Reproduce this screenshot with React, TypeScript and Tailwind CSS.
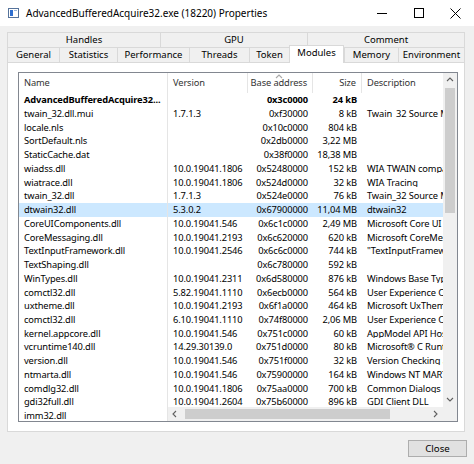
import React from 'react'

type Row = {
  name: string
  version: string
  base: string
  size: string
  desc: string
  bold?: boolean
}

const ROWS: Row[] = [
  { name: 'AdvancedBufferedAcquire32...', version: '', base: '0x3c0000', size: '24 kB', desc: '', bold: true },
  { name: 'twain_32.dll.mui', version: '1.7.1.3', base: '0xf30000', size: '8 kB', desc: 'Twain_32 Source Manager' },
  { name: 'locale.nls', version: '', base: '0x10c0000', size: '804 kB', desc: '' },
  { name: 'SortDefault.nls', version: '', base: '0x2db0000', size: '3,22 MB', desc: '' },
  { name: 'StaticCache.dat', version: '', base: '0x38f0000', size: '18,38 MB', desc: '' },
  { name: 'wiadss.dll', version: '10.0.19041.1806', base: '0x52480000', size: '152 kB', desc: 'WIA TWAIN compatibility layer' },
  { name: 'wiatrace.dll', version: '10.0.19041.1806', base: '0x524d0000', size: '32 kB', desc: 'WIA Tracing' },
  { name: 'twain_32.dll', version: '1.7.1.3', base: '0x524e0000', size: '76 kB', desc: 'Twain_32 Source Manager' },
  { name: 'dtwain32.dll', version: '5.3.0.2', base: '0x67900000', size: '11,04 MB', desc: 'dtwain32' },
  { name: 'CoreUIComponents.dll', version: '10.0.19041.546', base: '0x6c1c0000', size: '2,49 MB', desc: 'Microsoft Core UI Components' },
  { name: 'CoreMessaging.dll', version: '10.0.19041.2193', base: '0x6c620000', size: '620 kB', desc: 'Microsoft CoreMessaging Dll' },
  { name: 'TextInputFramework.dll', version: '10.0.19041.2546', base: '0x6c6c0000', size: '744 kB', desc: '"TextInputFramework.DYNLINK"' },
  { name: 'TextShaping.dll', version: '', base: '0x6c780000', size: '592 kB', desc: '' },
  { name: 'WinTypes.dll', version: '10.0.19041.2311', base: '0x6d580000', size: '876 kB', desc: 'Windows Base Types DLL' },
  { name: 'comctl32.dll', version: '5.82.19041.1110', base: '0x6ecb0000', size: '564 kB', desc: 'User Experience Controls Library' },
  { name: 'uxtheme.dll', version: '10.0.19041.2193', base: '0x6f1a0000', size: '464 kB', desc: 'Microsoft UxTheme Library' },
  { name: 'comctl32.dll', version: '6.10.19041.1110', base: '0x74f80000', size: '2,06 MB', desc: 'User Experience Controls Library' },
  { name: 'kernel.appcore.dll', version: '10.0.19041.546', base: '0x751c0000', size: '60 kB', desc: 'AppModel API Host' },
  { name: 'vcruntime140.dll', version: '14.29.30139.0', base: '0x751d0000', size: '80 kB', desc: 'Microsoft® C Runtime Library' },
  { name: 'version.dll', version: '10.0.19041.546', base: '0x751f0000', size: '32 kB', desc: 'Version Checking and File Installation' },
  { name: 'ntmarta.dll', version: '10.0.19041.546', base: '0x75900000', size: '164 kB', desc: 'Windows NT MARTA provider' },
  { name: 'comdlg32.dll', version: '10.0.19041.1806', base: '0x75aa0000', size: '700 kB', desc: 'Common Dialogs DLL' },
  { name: 'gdi32full.dll', version: '10.0.19041.2604', base: '0x75b60000', size: '896 kB', desc: 'GDI Client DLL' },
  { name: 'imm32.dll', version: '10.0.19041.2193', base: '0x75c70000', size: '156 kB', desc: 'Multi-User Windows IMM32 API' },
]

const SELECTED = 8

const TOP_TABS = [
  { label: 'Handles', w: 'w-[153px]' },
  { label: 'GPU', w: 'w-[147px]' },
  { label: 'Comment', w: 'flex-1' },
]

const BOTTOM_TABS = [
  { label: 'General', w: 'w-[52px]' },
  { label: 'Statistics', w: 'w-[58px]' },
  { label: 'Performance', w: 'w-[72px]' },
  { label: 'Threads', w: 'w-[60px]' },
  { label: 'Token', w: 'w-[40px]' },
  { label: 'Modules', w: 'w-[55px]', active: true },
  { label: 'Memory', w: 'w-[54px]' },
  { label: 'Environment', w: 'flex-1' },
]

function AppIcon() {
  return (
    <svg width="11" height="10" viewBox="0 0 11 10" className="shrink-0">
      <rect x="0.5" y="0.5" width="10" height="9" fill="#fff" stroke="#56739b" />
      <rect x="2" y="2" width="3" height="6" fill="#2f6fd0" />
      <rect x="6" y="2" width="3" height="1" fill="#9fb6d6" />
    </svg>
  )
}

function Chevron({ dir, color = '#606060' }: { dir: 'up' | 'down' | 'left' | 'right'; color?: string }) {
  const pts =
    dir === 'up'
      ? '1,5 4,2 7,5'
      : dir === 'down'
        ? '1,2 4,5 7,2'
        : dir === 'left'
          ? '5,1 2,4 5,7'
          : '2,1 5,4 2,7'
  return (
    <svg width="8" height="8" viewBox="0 0 8 8">
      <polyline points={pts} fill="none" stroke={color} strokeWidth="1.1" />
    </svg>
  )
}

function TitleBar() {
  return (
    <div className="flex h-[26px] shrink-0 items-center bg-white">
      <div className="flex flex-1 items-center gap-[7px] pl-[8px]">
        <AppIcon />
        <span className="text-[10px] text-black">AdvancedBufferedAcquire32.exe (18220) Properties</span>
      </div>
      <div className="flex h-full">
        <div className="flex w-[37px] items-center justify-center">
          <div className="h-px w-[10px] bg-black" />
        </div>
        <div className="flex w-[37px] items-center justify-center">
          <div className="h-[10px] w-[10px] border border-black" />
        </div>
        <div className="flex w-[37px] items-center justify-center">
          <svg width="11" height="11" viewBox="0 0 11 11">
            <path d="M0.5 0.5 L10.5 10.5 M10.5 0.5 L0.5 10.5" stroke="#000" strokeWidth="1" />
          </svg>
        </div>
      </div>
    </div>
  )
}

function Tabs() {
  return (
    <div className="flex flex-col text-[9.5px]">
      <div className="flex h-[15px]">
        {TOP_TABS.map((t, i) => (
          <div
            key={t.label}
            className={`${t.w} flex items-center justify-center border-t border-l border-[#d9d9d9] ${i === TOP_TABS.length - 1 ? 'border-r' : ''}`}
          >
            {t.label}
          </div>
        ))}
      </div>
      <div className="flex h-[15px] items-start">
        {BOTTOM_TABS.map((t, i) =>
          t.active ? (
            <div
              key={t.label}
              className={`${t.w} relative z-10 -mt-[2px] flex h-[18px] items-start justify-center border-t border-l border-r border-[#d9d9d9] bg-white pt-[2px]`}
            >
              {t.label}
            </div>
          ) : (
            <div
              key={t.label}
              className={`${t.w} flex h-[15px] items-center justify-center whitespace-nowrap border-t border-l border-[#d9d9d9] ${i === BOTTOM_TABS.length - 1 ? 'border-r' : ''}`}
            >
              {t.label}
            </div>
          ),
        )}
      </div>
    </div>
  )
}

function NameColumn() {
  return (
    <div className="flex w-[149px] shrink-0 flex-col border-r border-[#e5e5e5]">
      <div className="flex h-[20px] shrink-0 items-center pl-[5px] text-[#333]">Name</div>
      <div className="flex-1 overflow-hidden">
        {ROWS.map((r, i) => (
          <div
            key={i}
            className={`flex h-[13.74px] items-center whitespace-nowrap pl-[5px] ${r.bold ? 'font-bold' : ''} ${i === SELECTED ? 'bg-[#cce8ff]' : ''}`}
          >
            {r.name}
          </div>
        ))}
      </div>
    </div>
  )
}

function DataColumns() {
  return (
    <div className="flex w-[275px] shrink-0 flex-col">
      <div className="flex h-[20px] shrink-0 whitespace-nowrap text-[#333]">
        <div className="flex w-[80px] items-center border-r border-[#e5e5e5] pl-[5px]">Version</div>
        <div className="relative flex w-[65px] items-center justify-end border-r border-[#e5e5e5] pr-[5px]">
          <div className="absolute left-[27px] top-[0px]">
            <Chevron dir="up" color="#a8a8a8" />
          </div>
          Base address
        </div>
        <div className="flex w-[49px] items-center justify-end border-r border-[#e5e5e5] pr-[5px]">Size</div>
        <div className="flex flex-1 items-center pl-[5px]">Description</div>
      </div>
      <div className="flex-1 overflow-hidden">
        {ROWS.map((r, i) => (
          <div
            key={i}
            className={`flex h-[13.74px] items-center whitespace-nowrap ${r.bold ? 'font-bold' : ''} ${i === SELECTED ? 'bg-[#cce8ff]' : ''}`}
          >
            <div className="w-[80px] shrink-0 pl-[5px]">{r.version}</div>
            <div className="w-[65px] shrink-0 pr-[5px] text-right">{r.base}</div>
            <div className="w-[49px] shrink-0 pr-[5px] text-right">{r.size}</div>
            <div className="flex-1 overflow-hidden pl-[5px]">{r.desc}</div>
          </div>
        ))}
      </div>
      <div className="flex h-[14px] shrink-0 items-center bg-[#f0f0f0]">
        <div className="flex w-[14px] items-center justify-center">
          <Chevron dir="left" />
        </div>
        <div className="ml-[3px] h-[10px] w-[205px] bg-[#cdcdcd]" />
        <div className="flex-1" />
        <div className="flex w-[14px] items-center justify-center">
          <Chevron dir="right" />
        </div>
      </div>
    </div>
  )
}

function VScroll() {
  return (
    <div className="flex w-[14px] shrink-0 flex-col">
      <div className="flex flex-1 flex-col items-center bg-[#f0f0f0]">
        <div className="flex h-[14px] w-full items-center justify-center">
          <Chevron dir="up" />
        </div>
        <div className="mt-[1px] h-[125px] w-[10px] bg-[#cdcdcd]" />
        <div className="flex-1" />
        <div className="flex h-[14px] w-full items-center justify-center">
          <Chevron dir="down" />
        </div>
      </div>
      <div className="h-[14px] shrink-0 bg-[#f0f0f0]" />
    </div>
  )
}

function ModuleList() {
  return (
    <div className="ml-[10px] mt-[9px] flex h-[350px] w-[440px] border border-[#828790] bg-white text-[9.3px] tracking-[-0.12px] text-black">
      <NameColumn />
      <DataColumns />
      <VScroll />
    </div>
  )
}

export default function App() {
  return (
    <div className="flex h-[464px] w-[474px] flex-col overflow-hidden bg-[#f0f0f0] font-['Noto_Sans','Liberation_Sans',sans-serif] text-[9.7px] leading-none text-black">
      <TitleBar />
      <div className="flex flex-1 flex-col pl-[7px] pr-[9px] pt-[6px]">
        <Tabs />
        <div className="h-[370px] border border-[#d9d9d9] bg-white">
          <ModuleList />
        </div>
        <div className="flex justify-end pt-[8px]">
          <button className="-mr-[2px] flex h-[17px] w-[59px] items-center justify-center border border-[#adadad] bg-[#e1e1e1] text-black">
            Close
          </button>
        </div>
      </div>
    </div>
  )
}
